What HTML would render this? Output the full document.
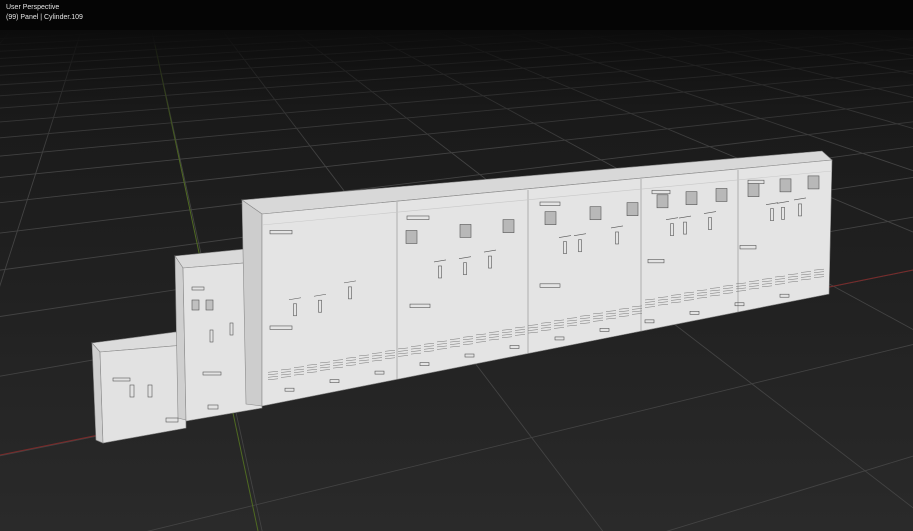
<!DOCTYPE html>
<html><head><meta charset="utf-8"><style>
html,body{margin:0;padding:0;background:#1a1a1a;overflow:hidden;width:913px;height:531px}
#c{position:relative;width:913px;height:531px;overflow:hidden}
.t{position:absolute;left:6px;color:#e6e6e6;font:7px "Liberation Sans",sans-serif}
</style></head><body><div id="c">
<svg id="s" width="913" height="531" viewBox="0 0 913 531" xmlns="http://www.w3.org/2000/svg" style="position:absolute;left:0;top:0">
<defs>
<linearGradient id="bg" x1="0" y1="0" x2="0" y2="1">
<stop offset="0" stop-color="#0c0c0c"/><stop offset="0.06" stop-color="#0c0c0c"/><stop offset="0.2" stop-color="#1a1a1a"/><stop offset="1" stop-color="#2a2a2a"/></linearGradient>
<linearGradient id="fade" x1="0" y1="0" x2="0" y2="1">
<stop offset="0" stop-color="#0c0c0c" stop-opacity="1"/><stop offset="0.06" stop-color="#0c0c0c" stop-opacity="1"/><stop offset="0.16" stop-color="#161616" stop-opacity="0.55"/><stop offset="0.3" stop-color="#1a1a1a" stop-opacity="0"/></linearGradient>
</defs>
<rect width="913" height="531" fill="url(#bg)"/>
<g id="grid" stroke="#434343" stroke-width="0.9" fill="none"></g>
<line x1="0" y1="455" x2="913" y2="270" stroke="#7a2a2a" stroke-width="1"/>
<line x1="155" y1="45" x2="258" y2="531" stroke="#4f6a22" stroke-width="1"/>
<rect width="913" height="531" fill="url(#fade)"/>
<rect width="913" height="30" fill="#050505"/>
<g id="m" stroke="#8a8a8a" stroke-width="0.6">
<polygon points="92,343 176,332 185,345 100,352" fill="#dcdcdc"/>
<polygon points="92,343 100,352 103,443 96,440" fill="#cfcfcf"/>
<polygon points="100,352 185,345 186,428 103,443" fill="#e2e2e2"/>
<polygon points="175,256 246,249 256,262 183,268" fill="#dadada"/>
<polygon points="175,256 183,268 186,420 178,418" fill="#cfcfcf"/>
<polygon points="183,268 256,262 262,408 186,421" fill="#e3e3e3"/>
<polygon points="242,200 822,151 832,160 262,214" fill="#d8d8d8"/>
<polygon points="242,200 262,214 262,406 246,404" fill="#cdcdcd"/>
<polygon points="262,214 832,160 829,294 262,406" fill="#e4e4e4"/>
<line x1="397" y1="202" x2="397" y2="379"/>
<line x1="528" y1="190" x2="528" y2="353"/>
<line x1="641" y1="179" x2="641" y2="331"/>
<line x1="738" y1="170" x2="738" y2="312"/>
<line x1="262" y1="225" x2="832" y2="171" stroke="#c8c8c8"/>
</g>
<g id="d" stroke="#555" stroke-width="0.6" fill="none"></g>
</svg>
<div class="t" style="top:4px">User Perspective</div>
<div class="t" style="top:14px">(99) Panel | Cylinder.109</div>
</div>
<script>
var ns="http://www.w3.org/2000/svg";
function L(g,x1,y1,x2,y2,c,w){var l=document.createElementNS(ns,"line");l.setAttribute("x1",x1);l.setAttribute("y1",y1);l.setAttribute("x2",x2);l.setAttribute("y2",y2);if(c)l.setAttribute("stroke",c);if(w)l.setAttribute("stroke-width",w);g.appendChild(l);}
function R(g,x,y,w,h,f){var r=document.createElementNS(ns,"rect");r.setAttribute("x",x);r.setAttribute("y",y);r.setAttribute("width",w);r.setAttribute("height",h);if(f)r.setAttribute("fill",f);g.appendChild(r);}
var O=[235,408],VX=[2734,-100],VY=[123,-100],ka=0.105,kb=0.16;
function P(u,v){var d=1+u*ka+v*kb;return[(O[0]+u*ka*VX[0]+v*kb*VY[0])/d,(O[1]+u*ka*VX[1]+v*kb*VY[1])/d];}
var g=document.getElementById("grid");
for(var v=-8;v<=150;v++){var um=(0.03-1-v*kb)/ka;um=Math.max(um,-300);var a=P(um,v),b=P(500,v);L(g,a[0],a[1],b[0],b[1]);}
for(var u=-150;u<=150;u++){var vm=(0.03-1-u*ka)/kb;vm=Math.max(vm,-300);var a=P(u,vm),b=P(u,800);L(g,a[0],a[1],b[0],b[1]);}
var d=document.getElementById("d");
function ty(x){return 214-(x-262)*0.0947}function by(x){return 406-(x-262)*0.197}
function Y(x,t){return ty(x)+(by(x)-ty(x))*t}
function lab(x,t,w){var y=Y(x,t);R(d,x,y-2,w,3.5);}
[[270,0.1,22],[270,0.6,22],[407,0.1,22],[410,0.6,20],[540,0.1,20],[540,0.6,20],[652,0.1,18],[648,0.55,16],[748,0.1,16],[740,0.55,16]].forEach(function(a){lab(a[0],a[1],a[2]);});
[[406,0.17],[460,0.17],[503,0.17],[545,0.15],[590,0.15],[627,0.15],[657,0.12],[686,0.12],[716,0.12],[748,0.11],[780,0.1],[808,0.1]].forEach(function(a){var y=Y(a[0],a[1]);R(d,a[0],y,11,13,"#b8b8b8");});
[[295,0.45],[320,0.45],[350,0.4],[440,0.35],[465,0.35],[490,0.33],[565,0.3],[580,0.3],[617,0.28],[672,0.27],[685,0.27],[710,0.26],[772,0.25],[783,0.25],[800,0.24]].forEach(function(a){var y=Y(a[0],a[1]);R(d,a[0]-1.5,y+8,3,12);L(d,a[0]-6,y+4,a[0]+6,y+2);});
for(var x=268;x<=820;x+=13){var y=Y(x,0.83);if(x>640)y=Y(x,0.8);for(var k=0;k<4;k++)L(d,x,y+k*2.5,x+10,y+k*2.5-1,"#777",0.5);}
for(var x=285;x<=810;x+=45){var y=Y(x,0.93);R(d,x,y,9,3);}
R(d,113,378,17,3);R(d,130,385,4,12);R(d,148,385,4,12);R(d,166,418,12,4);
R(d,192,287,12,3);R(d,192,300,7,10,"#c0c0c0");R(d,206,300,7,10,"#c0c0c0");R(d,210,330,3,12);R(d,230,323,3,12);R(d,203,372,18,3);R(d,208,405,10,4);
</script>
</body></html>
